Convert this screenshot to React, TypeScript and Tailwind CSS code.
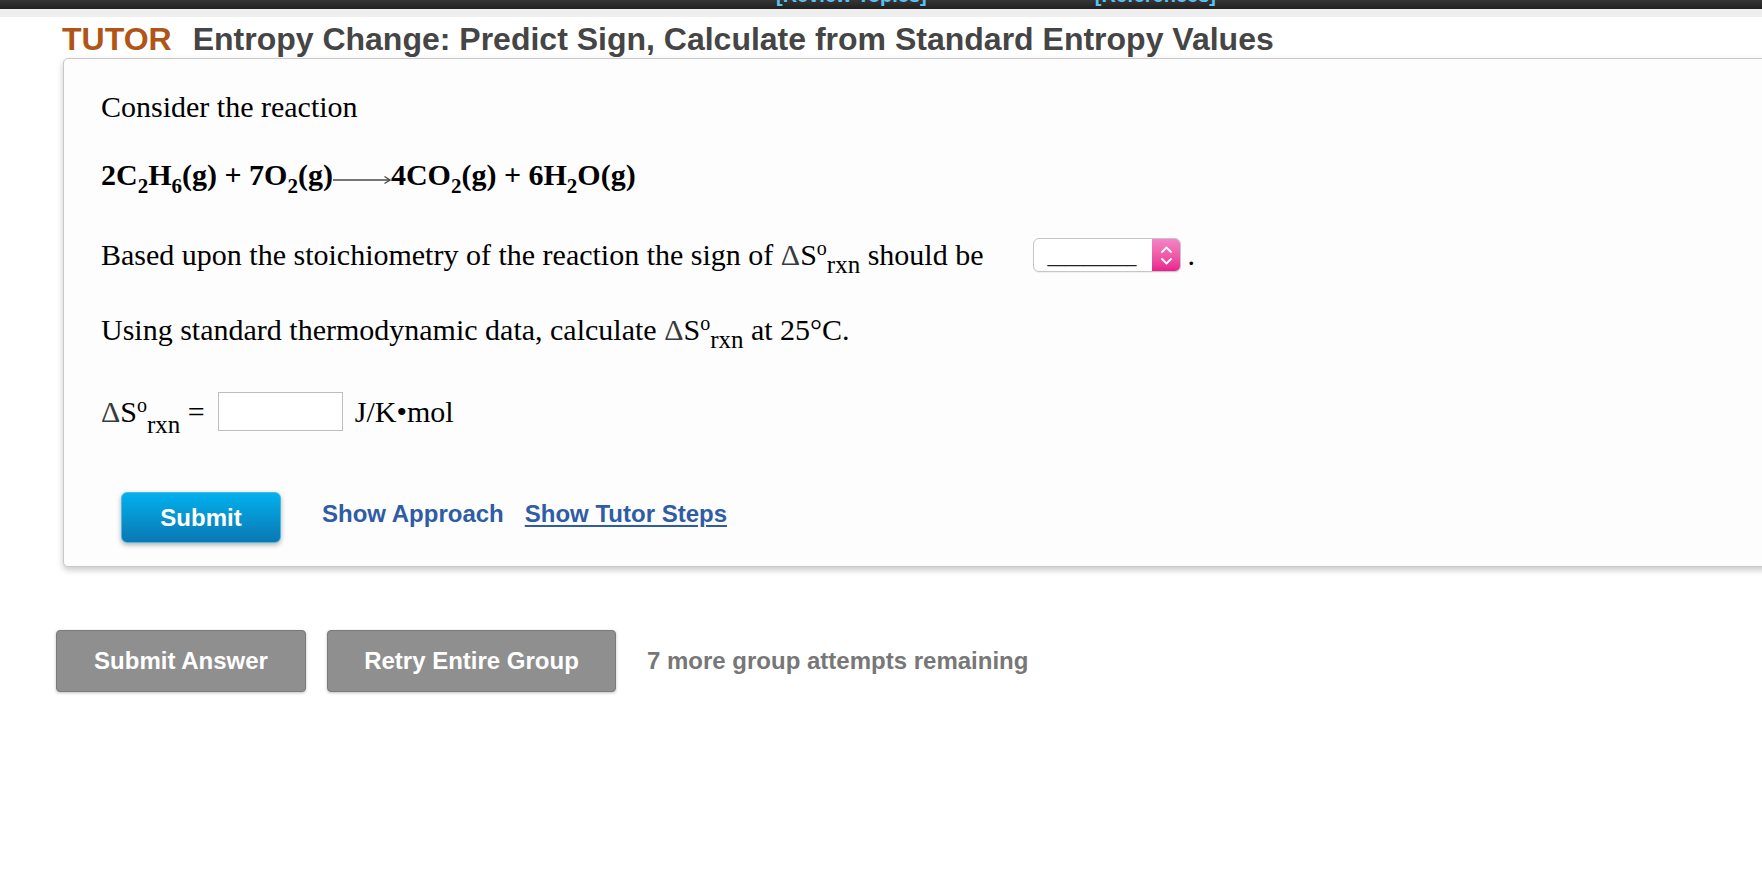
import React from "react";

function Sub({ children }: { children: React.ReactNode }) {
  return <span className="text-[21px] leading-[0] align-[-8px]">{children}</span>;
}

function DeltaS({ deep = false }: { deep?: boolean }) {
  return (
    <span className="whitespace-nowrap">
      <span className="text-[#3a3a3a]">Δ</span>S
      <span className="text-[20px] leading-[0] align-[10px]">o</span>
      {deep ? (
        <span className="text-[25px] leading-[0] align-[-11px]">rxn</span>
      ) : (
        <span className="text-[25px] leading-[0] align-[-8px]">rxn</span>
      )}
    </span>
  );
}

function Arrow() {
  return (
    <svg width="58" height="12" viewBox="0 0 58 12" className="inline-block align-baseline">
      <line x1="0" y1="7" x2="57" y2="7" stroke="#4a4a4a" strokeWidth="1.4" />
      <path d="M51.5 3.5 L57 7 L51.5 10.5" fill="none" stroke="#4a4a4a" strokeWidth="1.3" />
    </svg>
  );
}

function Dropdown() {
  return (
    <div className="ml-[50px] flex h-[34px] w-[148px] overflow-hidden rounded-[6px] border border-[#c6c6c6] bg-white shadow-[0_1px_1px_rgba(0,0,0,0.06)]">
      <div className="flex-1 pl-[13px] pt-[11px] font-['Liberation_Sans',Arial,sans-serif] text-[16px] leading-[16px] text-[#222]">
        __________
      </div>
      <div className="flex w-[28px] flex-col items-center justify-center gap-[5px] bg-linear-to-b from-[#f285c5] to-[#e81e8d]">
        <svg width="11" height="7" viewBox="0 0 11 7">
          <path d="M1 6 L5.5 1.5 L10 6" fill="none" stroke="white" strokeWidth="1.8" strokeLinecap="round" strokeLinejoin="round" />
        </svg>
        <svg width="11" height="7" viewBox="0 0 11 7">
          <path d="M1 1 L5.5 5.5 L10 1" fill="none" stroke="white" strokeWidth="1.8" strokeLinecap="round" strokeLinejoin="round" />
        </svg>
      </div>
    </div>
  );
}

export default function App() {
  return (
    <div className="min-h-screen w-full overflow-hidden bg-white font-['Liberation_Sans',Arial,sans-serif]">
      {/* top dark bar */}
      <div className="h-[9px] overflow-hidden bg-linear-to-b from-[#363636] to-[#202020]">
        <div className="-mt-[15px] flex text-[20px] font-bold leading-[20px] text-[#5cc0f0] whitespace-nowrap">
          <span className="ml-[776px]">[Review Topics]</span>
          <span className="ml-[168px]">[References]</span>
        </div>
      </div>
      <div className="h-[8px] bg-[#efefef]" />

      {/* title */}
      <div className="flex h-[41px] pl-[62px] pt-[6px] text-[32px] font-bold leading-[32px] whitespace-nowrap">
        <span className="text-[#b05417]">TUTOR</span>
        <span className="ml-[21px] text-[#454545]">
          Entropy Change: Predict Sign, Calculate from Standard Entropy Values
        </span>
      </div>

      {/* panel */}
      <div className="-mr-[20px] ml-[63px] rounded-l-[5px] border border-[#c9c9c9] bg-[#fdfdfd] pb-[23px] pl-[37px] pt-[33px] font-['Liberation_Serif','Times_New_Roman',serif] text-[30px] leading-[30px] text-black shadow-[0_3px_6px_rgba(0,0,0,0.22)]">
        <div>Consider the reaction</div>

        <div className="mt-[38px] font-bold whitespace-nowrap">
          2C<Sub>2</Sub>H<Sub>6</Sub>(g) + 7O<Sub>2</Sub>(g)
          <Arrow />
          4CO<Sub>2</Sub>(g) + 6H<Sub>2</Sub>O(g)
        </div>

        <div className="mt-[48px] flex items-start whitespace-nowrap">
          <span className="mt-[2px]">
            Based upon the stoichiometry of the reaction the sign of <DeltaS /> should be
          </span>
          <Dropdown />
          <span className="ml-[6px] mt-[2px]">.</span>
        </div>

        <div className="mt-[43px] whitespace-nowrap">
          Using standard thermodynamic data, calculate <DeltaS /> at 25°C.
        </div>

        <div className="mt-[47px] flex items-start whitespace-nowrap">
          <span className="mt-[5px]">
            <DeltaS deep /> =
          </span>
          <div className="ml-[13px] h-[39px] w-[125px] border border-[#bdbdbd] bg-white" />
          <span className="ml-[12px] mt-[5px]">J/K•mol</span>
        </div>

        <div className="ml-[20px] mt-[61px] flex items-center font-['Liberation_Sans',Arial,sans-serif]">
          <button className="h-[51px] w-[160px] rounded-[6px] border border-[#46b9e6] bg-linear-to-b from-[#00b1ee] to-[#0a78b3] text-[24px] font-bold text-white shadow-[0_2px_5px_rgba(0,0,0,0.3)]">
            Submit
          </button>
          <div className="mb-[8px] ml-[41px] flex text-[24px] font-bold text-[#2e5ca5] whitespace-nowrap">
            <span>Show Approach</span>
            <span className="ml-[21px] underline underline-offset-[3px]">Show Tutor Steps</span>
          </div>
        </div>
      </div>

      {/* bottom buttons */}
      <div className="ml-[56px] mt-[63px] flex items-center whitespace-nowrap">
        <button className="h-[62px] w-[250px] rounded-[4px] border border-[#7b7b7b] bg-[#8f8f8f] text-[24px] font-bold text-white shadow-[0_1px_3px_rgba(0,0,0,0.25)]">
          Submit Answer
        </button>
        <button className="ml-[21px] h-[62px] w-[289px] rounded-[4px] border border-[#7b7b7b] bg-[#8f8f8f] text-[24px] font-bold text-white shadow-[0_1px_3px_rgba(0,0,0,0.25)]">
          Retry Entire Group
        </button>
        <span className="ml-[31px] text-[24px] font-bold text-[#777]">7 more group attempts remaining</span>
      </div>
    </div>
  );
}
